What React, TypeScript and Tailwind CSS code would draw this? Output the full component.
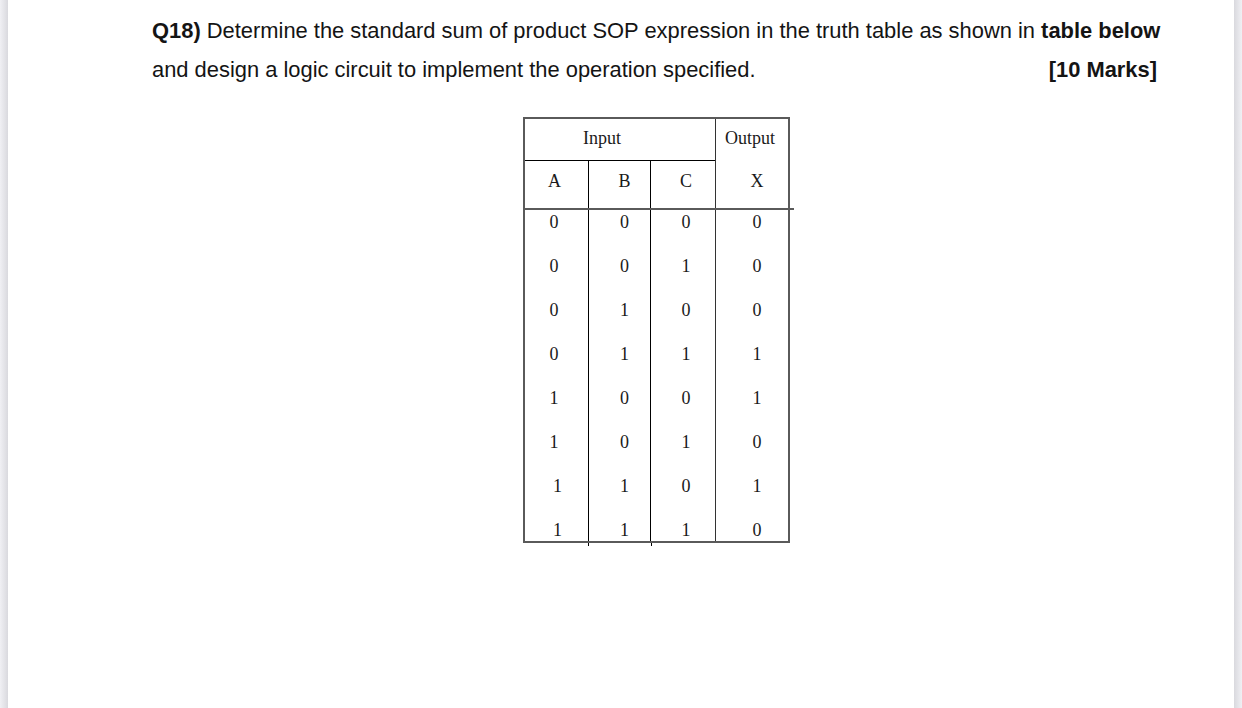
const rows: [string, string, string, string][] = [
  ["0", "0", "0", "0"],
  ["0", "0", "1", "0"],
  ["0", "1", "0", "0"],
  ["0", "1", "1", "1"],
  ["1", "0", "0", "1"],
  ["1", "0", "1", "0"],
  ["1", "1", "0", "1"],
  ["1", "1", "1", "0"],
];

function TruthTable() {
  return (
    <div
      className="relative w-[267px] border-2 border-[#5a5a5a] text-[18px] leading-none text-[#1a1a1a]"
      style={{ fontFamily: '"Liberation Serif", "Times New Roman", serif' }}
    >
      {/* header */}
      <div className="relative flex border-b-2 border-[#5a5a5a]">
        <div className="flex w-[190px] flex-col">
          <div className="flex h-[42px] items-center justify-center border-b border-black pr-[36px] pb-[4px]">
            Input
          </div>
          <div className="flex h-[47px]">
            <div className="flex w-[63px] items-center justify-center pr-[4px] pb-[8px]">A</div>
            <div className="flex w-[62px] items-center justify-center border-l border-black pl-[10px] pb-[8px]">B</div>
            <div className="flex w-[65px] items-center justify-center border-l border-black pl-[6px] pb-[8px]">C</div>
          </div>
        </div>
        <div className="flex w-[73px] flex-col border-l border-[#333]">
          <div className="flex h-[42px] items-center justify-center pr-[4px] pb-[4px]">Output</div>
          <div className="flex h-[47px] items-center justify-center pl-[10px] pb-[8px]">X</div>
        </div>
        <span className="absolute right-[-6px] bottom-[-2px] h-[2px] w-[4px] bg-[#5a5a5a]" />
      </div>
      {/* body */}
      {rows.map((r, i) => (
        <div
          key={i}
          className={`flex ${i === rows.length - 1 ? "h-[23px]" : "h-[44px]"}`}
        >
          <div className={`flex w-[63px] justify-center pt-[3px] ${i >= 6 ? "pl-[2px]" : "pr-[5px]"}`}>{r[0]}</div>
          <div className="flex w-[62px] justify-center border-l border-black pt-[3px] pl-[10px]">{r[1]}</div>
          <div className="flex w-[65px] justify-center border-l border-black pt-[3px] pl-[6px]">{r[2]}</div>
          <div className="flex w-[73px] justify-center border-l border-[#333] pt-[3px] pl-[10px]">{r[3]}</div>
        </div>
      ))}
      <span className="absolute bottom-[-5px] left-[63px] h-[3px] w-px bg-black" />
      <span className="absolute bottom-[-5px] left-[126px] h-[3px] w-px bg-black" />
    </div>
  );
}

export default function App() {
  return (
    <div className="flex h-[708px] w-[1242px] overflow-hidden bg-white">
      <div className="w-[8px] shrink-0 bg-linear-to-r from-[#f0f0f4] to-[#d9d9de]" />
      <main
        className="min-w-0 flex-1 pt-[11px] pl-[144px] pr-[77px] text-[21.9px] text-[#141414]"
        style={{ fontFamily: '"Liberation Sans", Arial, sans-serif' }}
      >
        <p className="h-[39px] leading-[39px] whitespace-nowrap">
          <b>Q18)</b> Determine the standard sum of product SOP expression in the truth table as shown in{" "}
          <b>table below</b>
        </p>
        <div className="flex h-[39px] items-center justify-between leading-[39px] whitespace-nowrap">
          <span>and design a logic circuit to implement the operation specified.</span>
          <b>[10 Marks]</b>
        </div>
        <div className="mt-[28px] ml-[371px]">
          <TruthTable />
        </div>
      </main>
      <div className="w-[8px] shrink-0 bg-linear-to-r from-[#d9d9de] to-[#f0f0f4]" />
    </div>
  );
}
